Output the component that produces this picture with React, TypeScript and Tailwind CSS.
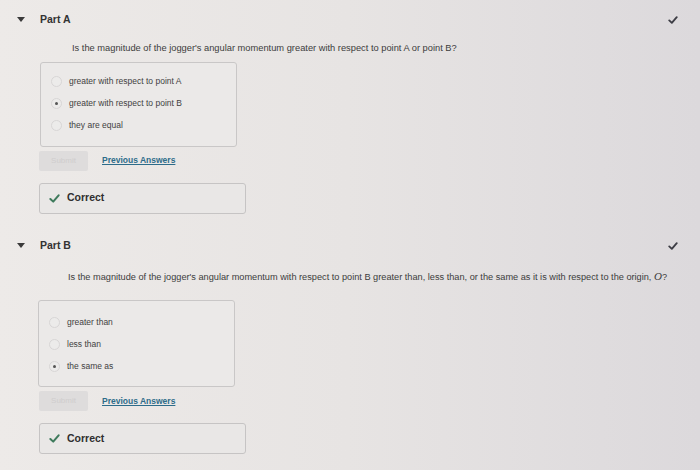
import React from "react";

type Props = {
  title: string;
  question: React.ReactNode;
  options: string[];
  selected: number;
  qClass: string;
  titleTop: string;
  boxTop: string;
  rowTop: string;
};

function Caret() {
  return (
    <svg width="8" height="6" viewBox="0 0 8 6" className="shrink-0">
      <path d="M0 0 L8 0 L4 5 Z" fill="#3a3a3a" />
    </svg>
  );
}

function Check({ color, size = 11 }: { color: string; size?: number }) {
  return (
    <svg width={size} height={size} viewBox="0 0 12 12" className="shrink-0">
      <path d="M1.5 6.5 L4.6 9.4 L10.5 2.6" fill="none" stroke={color} strokeWidth="2.2" strokeLinecap="round" strokeLinejoin="round" />
    </svg>
  );
}

function Radio({ on }: { on: boolean }) {
  return (
    <span className="flex h-[11px] w-[11px] shrink-0 items-center justify-center rounded-full border border-[#d8d6d6] bg-[#ecebea]">
      {on && <span className="h-[3px] w-[3px] rounded-full bg-[#555]" />}
    </span>
  );
}

function Part({ title, question, options, selected, qClass, titleTop, boxTop, rowTop }: Props) {
  return (
    <section className={titleTop}>
      <div className="flex items-center pl-[17px] pr-[22px]">
        <Caret />
        <span className="ml-[15px] text-[10.5px] font-bold text-[#333]">{title}</span>
        <span className="ml-auto">
          <Check color="#3d3d45" size={10} />
        </span>
      </div>

      <div className="pl-[39px]">
        <p className={`text-[#3c3c3c] ${qClass}`}>{question}</p>

        <div className={`w-[197px] rounded-[3px] border border-[#c9c7c7] bg-[#ebe9e8] pb-[9px] pl-[10px] ${boxTop} ${rowTop}`}>
          {options.map((o, i) => (
            <div key={o} className="flex h-[22px] items-center gap-[7px]">
              <Radio on={i === selected} />
              <span className="text-[8.5px] text-[#3f3f3f]">{o}</span>
            </div>
          ))}
        </div>

        <div className="mt-[4px] flex items-center">
          <div className="flex h-[20px] w-[49px] items-center justify-center rounded-[2px] bg-[#dedcdc] text-[8px] text-[#cfcdcd]">
            Submit
          </div>
          <a className="ml-[14px] text-[8.5px] font-bold text-[#2d6c8a] underline underline-offset-1">
            Previous Answers
          </a>
        </div>

        <div className="mt-[12px] flex h-[31px] w-[207px] items-center rounded-[3px] border border-[#c6c4c4] bg-[#e9e7e6] pl-[9px]">
          <Check color="#3e7a5c" size={11} />
          <span className="ml-[7px] text-[10.5px] font-bold text-[#2f2f2f]">Correct</span>
        </div>
      </div>
    </section>
  );
}

export default function App() {
  return (
    <div
      className="h-[470px] w-[700px] overflow-hidden bg-gradient-to-r from-[#edeae8] via-[#e7e4e3] to-[#dcd9dc]"
      style={{ fontFamily: '"Liberation Sans", Arial, sans-serif' }}
    >
      <Part
        title="Part A"
        titleTop="pt-[12px]"
        qClass="ml-[33px] mt-[14px] text-[9.3px]"
        boxTop="mt-[6px] ml-[1px]"
        rowTop="pt-[8px]"
        question="Is the magnitude of the jogger's angular momentum greater with respect to point A or point B?"
        options={["greater with respect to point A", "greater with respect to point B", "they are equal"]}
        selected={1}
      />
      <Part
        title="Part B"
        titleTop="pt-[24px]"
        qClass="ml-[29px] mt-[15px] text-[9.2px]"
        boxTop="mt-[15px] -ml-[1px]"
        rowTop="pt-[10px]"
        question={
          <>
            Is the magnitude of the jogger's angular momentum with respect to point B greater than, less than, or the same as it is with respect to the origin,{" "}
            <i style={{ fontFamily: '"Liberation Serif", serif' }} className="text-[11px]">O</i>?
          </>
        }
        options={["greater than", "less than", "the same as"]}
        selected={2}
      />
    </div>
  );
}
